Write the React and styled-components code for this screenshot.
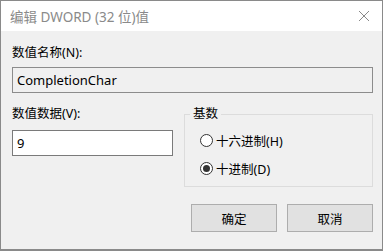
import React from 'react'
import styled, { createGlobalStyle } from 'styled-components'

const GlobalStyle = createGlobalStyle`
  html, body {
    margin: 0;
    padding: 0;
    background: #f0f0f0;
  }
  body {
    font-family: "Noto Sans", "Noto Sans CJK SC", sans-serif;
    font-size: 12.5px;
    color: #000;
  }
`

const Window = styled.div`
  box-sizing: border-box;
  width: 383px;
  height: 251px;
  border: 1px solid #8a8a8a;
  border-bottom-width: 2px;
  background: #f0f0f0;
  display: flex;
  flex-direction: column;
`

const TitleBar = styled.div`
  height: 30px;
  background: #fff;
  display: flex;
  align-items: center;
  justify-content: space-between;
  padding: 0 9px 0 9px;
  color: #8a8a8a;
  font-size: 13.5px;
`

const CloseButton = styled.div`
  width: 14px;
  height: 14px;
  display: flex;
  align-items: center;
  justify-content: center;
  margin-right: 2px;
`

const Body = styled.div`
  flex: 1;
  padding: 14px 9px 0 11px;
  display: flex;
  flex-direction: column;
`

const Label = styled.div`
  line-height: 16px;
  height: 16px;
`

const TextBox = styled.div`
  box-sizing: border-box;
  height: 26px;
  width: ${p => p.$width || '100%'};
  margin-top: ${p => p.$top || 6}px;
  border: 1px solid ${p => (p.$readOnly ? '#8c8c8c' : '#7a7a7a')};
  background: ${p => (p.$readOnly ? '#f0f0f0' : '#fff')};
  display: flex;
  align-items: center;
  padding-left: 4px;
  font-size: 13px;
`

const Row = styled.div`
  display: flex;
  justify-content: space-between;
  margin-top: 13px;
`

const Column = styled.div`
  display: flex;
  flex-direction: column;
`

const Group = styled.div`
  box-sizing: border-box;
  position: relative;
  width: 189px;
  height: 73px;
  margin-top: 8px;
  border: 1px solid #dcdcdc;
  padding: 17px 0 0 15px;
  display: flex;
  flex-direction: column;
  gap: 12px;
`

const GroupTitle = styled.div`
  position: absolute;
  top: -9px;
  left: 5px;
  padding: 0 3px;
  background: #f0f0f0;
  line-height: 16px;
`

const RadioRow = styled.div`
  display: flex;
  align-items: center;
  gap: 3px;
  height: 16px;
`

const RadioCircle = styled.div`
  box-sizing: border-box;
  width: 13px;
  height: 13px;
  border-radius: 50%;
  border: 1px solid #333;
  background: #fff;
  display: flex;
  align-items: center;
  justify-content: center;
  &::after {
    content: '';
    width: 7px;
    height: 7px;
    border-radius: 50%;
    background: ${p => (p.$checked ? '#333' : 'transparent')};
  }
`

const ButtonRow = styled.div`
  display: flex;
  justify-content: flex-end;
  gap: 10px;
  margin-top: 17px;
`

const Button = styled.div`
  box-sizing: border-box;
  width: 86px;
  height: 28px;
  background: #e1e1e1;
  border: 1px solid #adadad;
  display: flex;
  align-items: center;
  justify-content: center;
`

export default function App () {
  return (
    <>
      <GlobalStyle />
      <Window>
        <TitleBar>
          <span>编辑 DWORD (32 位)值</span>
          <CloseButton>
            <svg width='12' height='12' viewBox='0 0 12 12'>
              <path d='M1 1 L11 11 M11 1 L1 11' stroke='#8a8a8a' strokeWidth='1' fill='none' />
            </svg>
          </CloseButton>
        </TitleBar>
        <Body>
          <Label>数值名称(N):</Label>
          <TextBox $readOnly>CompletionChar</TextBox>
          <Row>
            <Column>
              <Label>数值数据(V):</Label>
              <TextBox $width='161px' $top={8}>9</TextBox>
            </Column>
            <Group>
              <GroupTitle>基数</GroupTitle>
              <RadioRow>
                <RadioCircle />
                <span>十六进制(H)</span>
              </RadioRow>
              <RadioRow>
                <RadioCircle $checked />
                <span>十进制(D)</span>
              </RadioRow>
            </Group>
          </Row>
          <ButtonRow>
            <Button>确定</Button>
            <Button>取消</Button>
          </ButtonRow>
        </Body>
      </Window>
    </>
  )
}
